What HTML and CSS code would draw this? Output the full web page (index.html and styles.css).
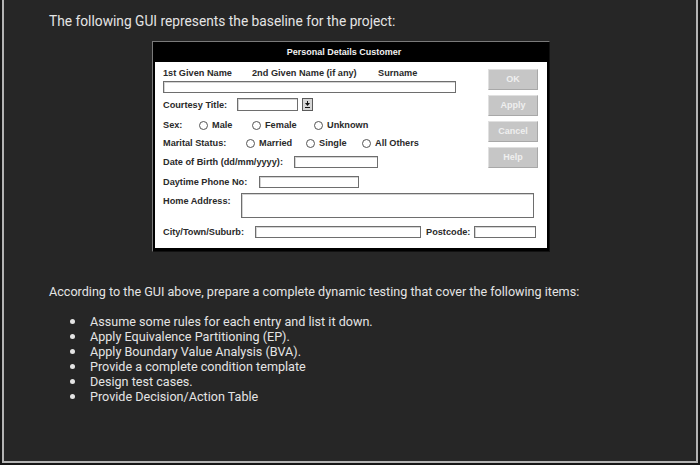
FILE: index.html
```html
<!DOCTYPE html>
<html lang="en">
<head>
    <meta charset="UTF-8">
    <title>Dynamic Testing Task</title>
    <link rel="stylesheet" href="styles.css">
</head>
<body>
    <div class="frame">
        <p class="intro">The following GUI represents the baseline for the project:</p>

        <div class="window">
            <div class="titlebar">Personal Details Customer</div>
            <div class="client">
                <div class="top-part">
                    <div class="fields">
                        <div class="row names-row">
                            <span class="name-1">1st Given Name</span>
                            <span class="name-2">2nd Given Name (if any)</span>
                            <span>Surname</span>
                        </div>
                        <div class="row name-input-row">
                            <span class="box name-box"></span>
                        </div>
                        <div class="row title-row">
                            <span class="lbl lbl-title">Courtesy Title:</span>
                            <span class="box title-box"></span>
                            <span class="drop-btn">
                                <svg width="7" height="9" viewBox="0 0 7 9">
                                    <path d="M1 3 L6 3 L3.5 6 Z" fill="#111"/>
                                    <rect x="1" y="7" width="5" height="1" fill="#111"/>
                                    <rect x="3" y="1" width="1" height="2" fill="#111"/>
                                </svg>
                            </span>
                        </div>
                        <div class="row sex-row">
                            <span class="lbl lbl-sex">Sex:</span>
                            <span class="opt opt-male"><i class="radio"></i>Male</span>
                            <span class="opt opt-female"><i class="radio"></i>Female</span>
                            <span class="opt"><i class="radio"></i>Unknown</span>
                        </div>
                        <div class="row marital-row">
                            <span class="lbl lbl-marital">Marital Status:</span>
                            <span class="opt opt-married"><i class="radio"></i>Married</span>
                            <span class="opt opt-single"><i class="radio"></i>Single</span>
                            <span class="opt"><i class="radio"></i>All Others</span>
                        </div>
                        <div class="row dob-row">
                            <span class="lbl lbl-dob">Date of Birth (dd/mm/yyyy):</span>
                            <span class="box dob-box"></span>
                        </div>
                        <div class="row phone-row">
                            <span class="lbl lbl-phone">Daytime Phone No:</span>
                            <span class="box phone-box"></span>
                        </div>
                    </div>
                    <div class="buttons">
                        <span class="win-btn">OK</span>
                        <span class="win-btn">Apply</span>
                        <span class="win-btn">Cancel</span>
                        <span class="win-btn">Help</span>
                    </div>
                </div>
                <div class="row address-row">
                    <span class="lbl lbl-address">Home Address:</span>
                    <span class="box address-box"></span>
                </div>
                <div class="row city-row">
                    <span class="lbl lbl-city">City/Town/Suburb:</span>
                    <span class="box city-box"></span>
                    <span class="lbl lbl-post">Postcode:</span>
                    <span class="box post-box"></span>
                </div>
            </div>
        </div>

        <p class="task">According to the GUI above, prepare a complete dynamic testing that cover the following items:</p>
        <ul class="items">
            <li>Assume some rules for each entry and list it down.</li>
            <li>Apply Equivalence Partitioning (EP).</li>
            <li>Apply Boundary Value Analysis (BVA).</li>
            <li>Provide a complete condition template</li>
            <li>Design test cases.</li>
            <li>Provide Decision/Action Table</li>
        </ul>
    </div>
</body>
</html>
```

FILE: styles.css
```css
body
{
    margin: 0;
    background: #161616;
    font-family: Roboto, "Liberation Sans", sans-serif;
}

.frame
{
    margin-left: 2px;
    width: 692px;
    height: 461px;
    background: #262626;
    border: 2px solid #b4b4b4;
    border-top: none;
    color: #e4e4e4;
    overflow: hidden;
}

.intro
{
    margin: 13px 0 0 45px;
    font-size: 13.75px;
    line-height: 16px;
}

/* old windows dialog */
.window
{
    margin: 12px 0 0 148px;
    width: 392px;
    background: #000;
    border: 1px solid #7a7a7a;
    border-right-color: #111;
    border-bottom-color: #111;
    padding: 0 2px 3px 2px;
    font-family: "Liberation Sans", Arial, sans-serif;
    font-weight: bold;
    font-size: 9.2px;
    color: #2a2a2a;
}

.titlebar
{
    height: 20px;
    line-height: 20px;
    text-align: center;
    color: #f2f2f2;
    font-size: 9px;
    padding-right: 14px;
}

.client
{
    background: #fff;
    height: 186px;
    padding: 4px 0 0 8px;
    box-sizing: border-box;
}

.top-part
{
    display: flex;
}

.fields
{
    width: 325px;
}

.row
{
    display: flex;
    align-items: center;
    white-space: nowrap;
}

.names-row { height: 14px; }
.name-1 { width: 89px; }
.name-2 { width: 126px; }

.name-input-row { height: 12px; margin-top: 1px; }
.title-row { height: 13px; margin-top: 5px; }
.sex-row { height: 14px; margin-top: 7px; }
.marital-row { height: 14px; margin-top: 4px; }
.dob-row { height: 14px; margin-top: 5px; }
.phone-row { height: 14px; margin-top: 6px; }
.address-row { height: 25px; margin-top: 4px; align-items: flex-start; }
.city-row { height: 12px; margin-top: 8px; }

.lbl-title { width: 74px; }
.lbl-sex { width: 36px; }
.lbl-marital { width: 83px; }
.lbl-dob { width: 131px; }
.lbl-phone { width: 96px; }
.lbl-address { width: 78px; padding-top: 3px; }
.lbl-city { width: 92px; }
.lbl-post { width: 48px; margin-left: 5px; }

.box
{
    display: block;
    box-sizing: border-box;
    height: 12px;
    background: #fff;
    border: 1px solid #6e6e6e;
    box-shadow: inset 1px 1px 0 #d4d4d4;
}

.name-box { width: 293px; }
.title-box { width: 61px; height: 13px; }
.dob-box { width: 84px; }
.phone-box { width: 100px; }
.address-box { width: 293px; height: 25px; }
.city-box { width: 166px; }
.post-box { width: 62px; }

.drop-btn
{
    display: flex;
    align-items: center;
    justify-content: center;
    width: 11px;
    height: 13px;
    margin-left: 4px;
    box-sizing: border-box;
    background: #d6d6d6;
    border: 1px solid #5a5a5a;
}

.opt
{
    display: flex;
    align-items: center;
}

.opt-male { width: 53px; }
.opt-female { width: 62px; }
.opt-married { width: 60px; }
.opt-single { width: 56px; }

.radio
{
    width: 7px;
    height: 7px;
    border: 1px solid #555;
    border-radius: 50%;
    margin-right: 4px;
    background: #fff;
}

.buttons
{
    display: flex;
    flex-direction: column;
    gap: 5px;
    margin-top: 3px;
}

.win-btn
{
    display: block;
    box-sizing: border-box;
    width: 50px;
    height: 21px;
    line-height: 19px;
    text-align: center;
    background: #c6c6c6;
    border: 1px solid #a8a8a8;
    border-top-color: #e0e0e0;
    border-left-color: #e0e0e0;
    color: #efefef;
    font-size: 9px;
}

.task
{
    margin: 32px 0 0 45px;
    font-size: 12.6px;
    line-height: 16px;
}

.items
{
    margin: 14px 0 0 0;
    padding-left: 86px;
    list-style: none;
    font-size: 12.6px;
    line-height: 15px;
}

.items li::before
{
    content: "";
    float: left;
    width: 5px;
    height: 5px;
    margin: 5px 0 0 -20px;
    border-radius: 50%;
    background: #e4e4e4;
}
```
